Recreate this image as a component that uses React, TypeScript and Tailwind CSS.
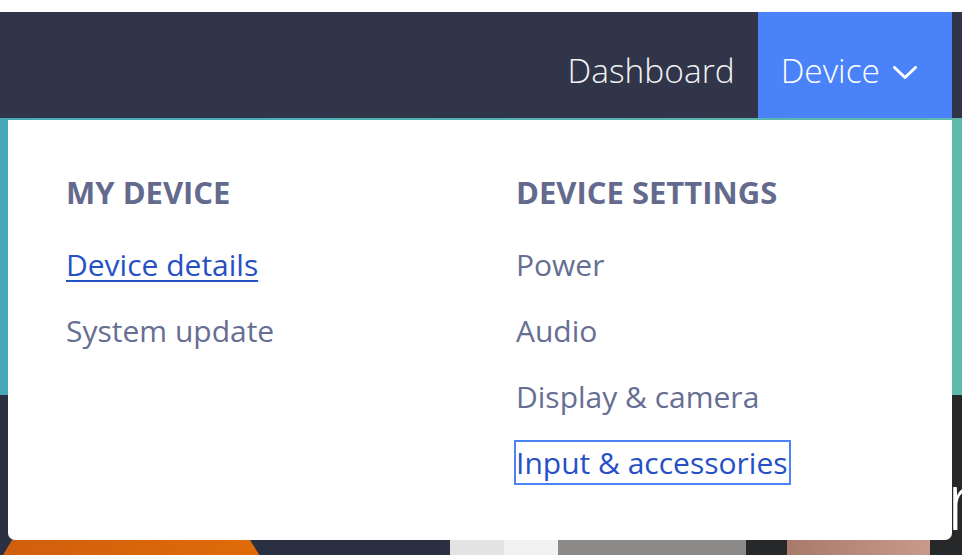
const font = { fontFamily: '"Open Sans", "Noto Sans", sans-serif' };

const myDevice = [{ label: "Device details", link: true }, { label: "System update" }];
const settings = [
  { label: "Power" },
  { label: "Audio" },
  { label: "Display & camera" },
  { label: "Input & accessories", focus: true },
];

type Item = { label: string; link?: boolean; focus?: boolean };

function MenuColumn({ title, items }: { title: string; items: Item[] }) {
  return (
    <div className="flex flex-col items-start">
      <h3 className="text-[31px] leading-[40px] font-bold text-[#636a8d] mb-[30px]">{title}</h3>
      <ul className="flex flex-col items-start gap-[21px]">
        {items.map((item) => (
          <li key={item.label}>
            <a
              href="#"
              className={
                "inline-block -ml-[2px] pr-px pt-px text-[30px] leading-[40px] border-2 " +
                (item.focus ? "border-[#4d84f5] " : "border-transparent ") +
                (item.link
                  ? "text-[#2651c5] underline decoration-2 underline-offset-[4px]"
                  : item.focus
                  ? "text-[#2651c5]"
                  : "text-[#676e93]")
              }
            >
              {item.label}
            </a>
          </li>
        ))}
      </ul>
    </div>
  );
}

export default function App() {
  return (
    <div className="w-[962px] h-[555px] overflow-hidden bg-white pt-3" style={font}>
      {/* Header */}
      <header className="relative h-[106px] bg-[#30354a] flex justify-end pr-[10px]">
        <nav className="flex h-full">
          <a href="#" className="flex items-center pt-[11px] px-[23px] text-[33.5px] font-light text-[#f2f2f2]">
            Dashboard
          </a>
          <button className="flex items-center pt-[11px] pl-[23px] pr-[35px] bg-[#4a82f9] text-[33.5px] font-light text-white">
            Device
            <svg viewBox="0 0 24 13" className="ml-[13px] mt-[4px] w-[24px] h-[13px]" fill="none" stroke="currentColor" strokeWidth={3} strokeLinecap="round" strokeLinejoin="round">
              <polyline points="1.5,1.5 12,11.5 22.5,1.5" />
            </svg>
          </button>
        </nav>

        {/* Dropdown menu */}
        <div className="absolute z-10 left-[8px] right-[10px] top-[108px] h-[420px] bg-white rounded-b-[7px] pt-[52px] pl-[58px] grid grid-cols-[450px_1fr]">
          <MenuColumn title="MY DEVICE" items={myDevice} />
          <MenuColumn title="DEVICE SETTINGS" items={settings} />
        </div>
      </header>

      {/* Page behind */}
      <section className="h-[277px] bg-gradient-to-r from-[#47a8ba] to-[#5ebaaa]" />
      <section className="flex h-[200px]">
        <div className="w-[450px] bg-[#2b2f42] pt-[145px]">
          <div className="w-[275px] h-[40px] bg-gradient-to-r from-[#d05e0d] to-[#e06d07] [clip-path:polygon(12px_0,250px_0,275px_40px,-12px_40px)]" />
        </div>
        <div className="w-[54px] bg-[#e3e3e3]" />
        <div className="w-[54px] bg-[#f1f1f1]" />
        <div className="w-[188px] bg-[#8b8a89]" />
        <div className="relative flex-1 overflow-hidden bg-[#26282a] pt-[145px] pl-[41px]">
          <div className="w-[143px] h-[40px] bg-gradient-to-r from-[#a87a6c] to-[#c79a8c]" />
          <span className="absolute left-[200px] top-[62px] text-[82px] leading-none font-light text-white">r</span>
        </div>
      </section>
    </div>
  );
}
